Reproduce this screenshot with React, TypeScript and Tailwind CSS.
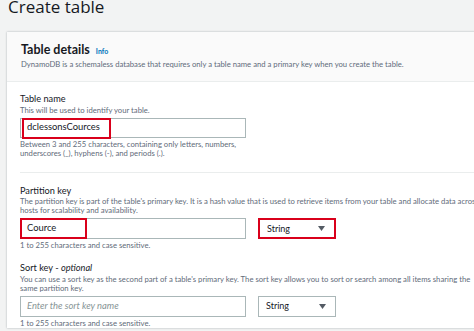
const BODY = { fontFamily: "Lato, 'Open Sans', sans-serif" };
const TITLE = { fontFamily: "'Open Sans', 'Liberation Sans', sans-serif" };

function Field({
  label,
  optional,
  desc,
  children,
  help,
}: {
  label: string;
  optional?: boolean;
  desc: React.ReactNode;
  children: React.ReactNode;
  help: React.ReactNode;
}) {
  return (
    <div>
      <div className="text-[9.2px] leading-[10px] text-[#16191f]">
        {label}
        {optional && (
          <>
            {" - "}
            <i>optional</i>
          </>
        )}
      </div>
      <div className="text-[7.7px] leading-[9px] text-[#5f6b7a] mt-[1.5px]">{desc}</div>
      <div className="mt-[3px] flex items-center gap-[12px]">{children}</div>
      <div className="text-[7.7px] leading-[9px] text-[#5f6b7a] mt-[2px]">{help}</div>
    </div>
  );
}

function Select({ highlight }: { highlight?: boolean }) {
  return (
    <div
      className={`w-[78px] h-[21px] flex items-center justify-between pl-[7px] pr-[9px] bg-white text-[9px] text-[#16191f] ${
        highlight ? "border-2 border-[#d9001b]" : "border border-[#aab7b8]"
      }`}
    >
      <span>String</span>
      <svg width="7" height="5" viewBox="0 0 7 5">
        <path d="M0 0h7L3.5 5z" fill="#545b64" />
      </svg>
    </div>
  );
}

export default function App() {
  return (
    <div className="w-[474px] h-[331px] overflow-hidden bg-[#f2f3f3]" style={BODY}>
      {/* Page title */}
      <div className="h-[32px] pl-[8px] overflow-hidden" style={TITLE}>
        <h1 className="text-[17px] leading-none -mt-[2px] text-[#16191f]">Create table</h1>
      </div>

      {/* Card */}
      <div className="ml-[7px] w-[560px] bg-white shadow-[0_0_2px_rgba(0,28,36,0.3)]">
        <div className="h-[50px] px-[14px] pt-[11px] bg-[#fafafa] border-b border-[#eaeded]">
          <div className="flex items-baseline gap-[6px]">
            <span className="text-[12.5px] font-bold text-[#16191f] leading-[14px]">Table details</span>
            <span className="text-[7px] font-bold text-[#0073bb]">Info</span>
          </div>
          <div className="text-[7.7px] leading-[9px] text-[#5f6b7a] mt-[2.5px]">
            DynamoDB is a schemaless database that requires only a table name and a primary key when you create the table.
          </div>
        </div>

        <div className="px-[13px] pt-[12px]">
          <Field
            label="Table name"
            desc="This will be used to identify your table."
            help={
              <>
                Between 3 and 255 characters, containing only letters, numbers,
                <br />
                underscores (_), hyphens (-), and periods (.).
              </>
            }
          >
            <div className="relative w-[226px] h-[20px] border border-[#aab7b8] bg-white flex items-center pl-[6px] text-[9.4px] text-[#16191f]">
              <div className="absolute left-[1px] top-[-1px] w-[89px] h-[21px] border-2 border-[#d9001b]" />
              dclessonsCources
            </div>
          </Field>

          <div className="border-t border-[#eaeded] mt-[14px] mb-[13px]" />

          <Field
            label="Partition key"
            desc={
              <>
                The partition key is part of the table's primary key. It is a hash value that is used to retrieve items from your table and allocate data across
                <br />
                hosts for scalability and availability.
              </>
            }
            help="1 to 255 characters and case sensitive."
          >
            <div className="relative w-[226px] h-[21px] border border-[#aab7b8] bg-white flex items-center pl-[6px] text-[9.4px] text-[#16191f]">
              <div className="absolute left-[-1px] top-[-1px] w-[67px] h-[21px] border-2 border-[#d9001b]" />
              Cource
            </div>
            <Select highlight />
          </Field>

          <div className="mt-[13px]">
            <Field
              label="Sort key"
              optional
              desc={
                <>
                  You can use a sort key as the second part of a table's primary key. The sort key allows you to sort or search among all items sharing the
                  <br />
                  same partition key.
                </>
              }
              help="1 to 255 characters and case sensitive."
            >
              <div className="w-[226px] h-[21px] border border-[#aab7b8] bg-white flex items-center pl-[6px] text-[9.4px] italic text-[#879596]">
                Enter the sort key name
              </div>
              <Select />
            </Field>
          </div>
        </div>
      </div>
    </div>
  );
}
